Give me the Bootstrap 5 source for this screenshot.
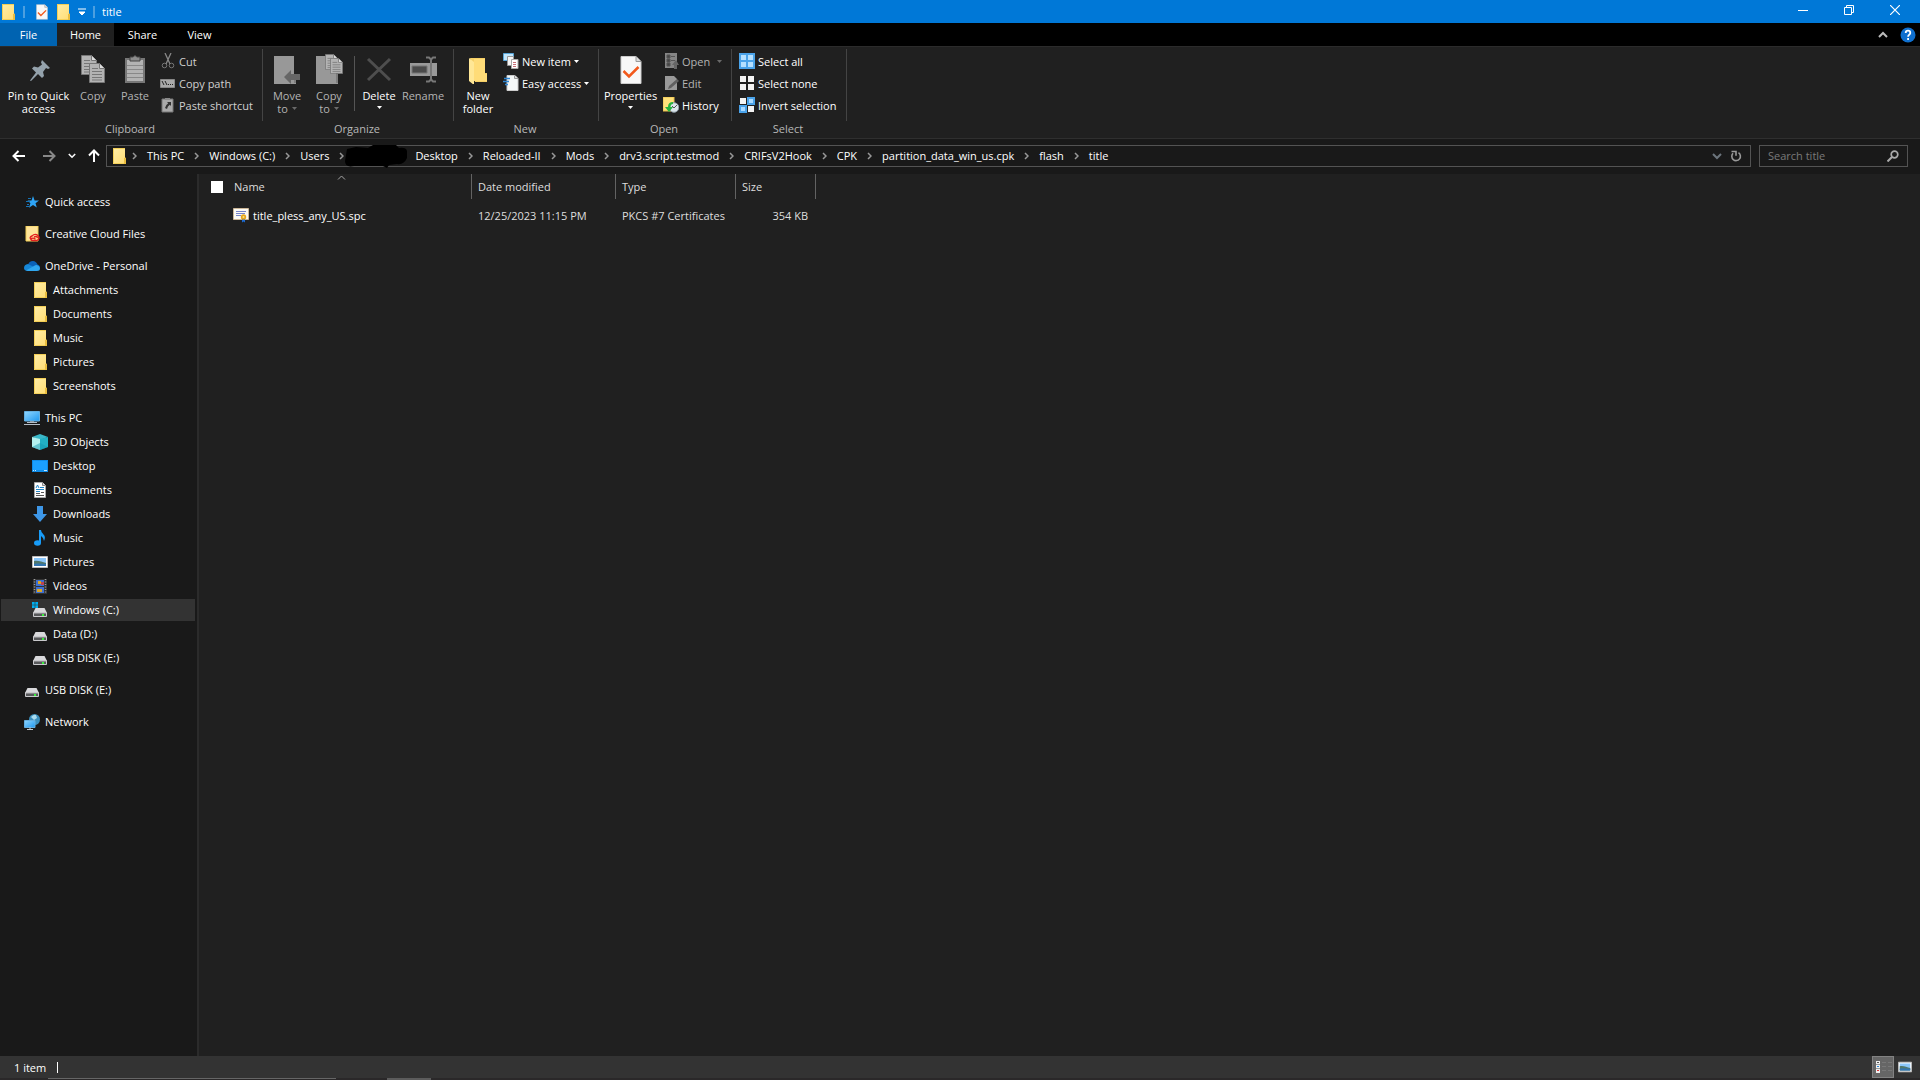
<!DOCTYPE html>
<html lang="en" data-bs-theme="dark">
<head>
<meta charset="utf-8">
<meta name="viewport" content="width=device-width, initial-scale=1">
<title>title</title>
<link href="https://cdn.jsdelivr.net/npm/bootstrap@5.3.0/dist/css/bootstrap.min.css" rel="stylesheet">
<style>
  body { font: 11px/13px "Open Sans", "Noto Sans", sans-serif; background: #202020; color: #fff; }
  button { font: inherit; color: inherit; background: none; border: 0; padding: 0; }
  a { color: inherit; text-decoration: none; }
  svg { display: block; flex: none; }
  .titlebar { height: 23px; background: #0078d7; gap: 7px; }
  .title-sep { width: 2px; height: 12px; background: #4c9fe0; }
  .win-group { padding-right: 2px; }
  .win-btn { width: 46px; height: 23px; padding-bottom: 3px; }
  .tabs { height: 23px; background: #000; }
  .tab-item { width: 57px; text-align: center; line-height: 23px; }
  .tab-file { background: #0063b1; }
  .tab-home { background: #202020; }
  .ribbon { height: 93px; border-top: 1px solid #2b2b2b; border-bottom: 1px solid #2f2f2f; background: #202020; }
  .group-box { padding: 2px 0 0 3px; position: relative; color: #d0d0d0; }
  .group-box::after { content: ""; position: absolute; right: 0; top: 2px; height: 72px; width: 1px; background: #444; }
  .group-body { height: 73px; }
  .group-name { text-align: center; color: #b8b8b8; padding-right: 6px; }
  .g-clip { width: 263px; } .g-org { width: 191px; } .g-new { width: 145px; } .g-open { width: 133px; } .g-sel { width: 115px; }
  .big-btn { width: 42px; height: 72px; padding-top: 5px; display: flex; flex-direction: column; align-items: center; white-space: nowrap; }
  .big-btn svg.big-icon { margin-bottom: 5px; }
  .w-pin { width: 69px; padding-left: 2px; } .w-mid { width: 57px; } .w-ren { width: 46px; }
  .on { color: #fff; }
  .off { color: #b4b4b4; }
  .small-btn { height: 22px; padding-left: 4px; gap: 3px; display: flex; align-items: center; white-space: nowrap; }
  .small-stack { padding-top: 1px; }
  .inner-sep { width: 1px; height: 55px; margin: 7px 3px 0 4px; background: #555; }
  .navrow { height: 35px; background: #191919; padding: 6px 12px 7px 12px; }
  .nav-btn { height: 22px; display: flex; align-items: center; justify-content: center; margin-right: 12px; }
  .nav-back { margin-right: 16px; }
  .nav-up { margin-right: 6px; }
  .address { border: 1px solid #535353; height: 22px; }
  .address-icon { margin-right: 5px; }
  .crumb { margin-right: 10px; padding-bottom: 2px; white-space: nowrap; }
  .crumb-gap { margin-right: 10px; }
  .blot { margin-right: 7px; }
  .search-box { width: 149px; height: 22px; border: 1px solid #535353; padding: 0 8px; }
  .search-box input { background: none; border: 0; outline: 0; padding: 0 0 1px; color: #fff; min-width: 0; width: 100px; }
  .search-box input::placeholder { color: #7a7a7a; opacity: 1; }
  .sidebar { width: 199px; background: #191919; border-right: 2px solid #2b2b2b; padding: 16px 2px 0 1px; }
  .tree-link { display: flex; align-items: center; gap: 5px; height: 22px; margin: 1px 0; padding: 0 0 2px 23px; }
  .tree-link svg { margin-top: 2px; }
  .tree-sub { padding-left: 31px; }
  .tree-gap { margin-top: 9px; }
  .tree-sel { background: #333; }
  .files { table-layout: fixed; width: 617px; border-collapse: collapse; color: #dedede; }
  .files th { font-weight: 400; height: 25px; padding: 0 6px; position: relative; }
  .files th::after { content: ""; position: absolute; right: 0; top: 0; width: 1px; height: 25px; background: #636363; }
  .files td { padding: 4px 8px 0 6px; height: 28px; white-space: nowrap; }
  .files .name-cell { padding-left: 34px; color: #fff; }
  .files .name-head { padding-left: 12px; }
  .c-name { width: 273px; } .c-date { width: 144px; } .c-type { width: 120px; } .c-size { width: 80px; }
  .check-all { appearance: none; width: 12px; height: 12px; background: #fff; margin: 0 11px 0 0; border: 0; }
  .sort-mark { position: absolute; left: 138px; top: 1px; }
  .statusbar { height: 22px; background: #333; padding-left: 14px; }
  .caret-bar { width: 1px; height: 11px; background: #fff; margin-left: 11px; }
  .view-btn { height: 22px; width: 22px; display: flex; align-items: center; justify-content: center; }
  .view-on { background: #666; border: 1px solid #828282; }
  .taskedge { height: 2px; background: #2a2829; }
  .edge-a { width: 288px; height: 1px; background: #666; margin-left: 48px; }
  .edge-b { width: 44px; height: 2px; background: #5c5c5c; margin-left: 51px; }
</style>
</head>
<body class="d-flex flex-column min-vh-100">
<svg width="0" height="0" class="position-absolute" aria-hidden="true">
  <defs>
    <linearGradient id="fold" x1="0" y1="0" x2="1" y2="1"><stop offset="0" stop-color="#ffeea8"/><stop offset="1" stop-color="#ffdc72"/></linearGradient>
    <linearGradient id="scr" x1="0" y1="0" x2="1" y2="1"><stop offset="0" stop-color="#8fd6ff"/><stop offset="1" stop-color="#1f98f0"/></linearGradient>
    <symbol id="folder" viewBox="0 0 16 16"><path d="M2 0h12v10h1v6H2z" fill="url(#fold)"/><path d="M2.500 .5v15h11M2 .5h12" stroke="#f3cf57" fill="none"/><path d="M13 15.500v-5.500l2-.5v6.500h-2z" fill="#e9bd3f"/></symbol>
    <symbol id="check-doc" viewBox="0 0 22 28"><path d="M1 .5h15l5 5v22H1z" fill="#f8f8f8" stroke="#ccc"/><path d="M16 .5v5h5" fill="#ddd" stroke="#999"/><path d="m3.500 15 5.500 5.500L18.500 11" stroke="#f2591c" stroke-width="2.500" fill="none"/></symbol>
    <symbol id="tri" viewBox="0 0 5 3"><path d="M0 0h5L2.500 3z" fill="currentColor"/></symbol>
    <symbol id="chev" viewBox="0 0 5 8"><path d="m1 1 3 3-3 3" fill="none" stroke="#989898" stroke-width="1.500"/></symbol>
    <symbol id="down" viewBox="0 0 10 7"><path d="m1 1 4 4 4-4" fill="none" stroke="currentColor" stroke-width="2"/></symbol>
    <symbol id="drive" viewBox="0 0 16 16"><path d="M3.500 6h9L15 11H1z" fill="#d9d9dc"/><path d="M1.500 10.500h13v4h-13z" fill="#58595b" stroke="#c9c9cc"/><path d="M2 11h12v1H2z" fill="#88888b"/><path d="M10 12h2v2h-2z" fill="#39f03d"/></symbol>
    <symbol id="pc" viewBox="0 0 16 16"><path d="M.5 1.500h15v9.500H.5z" fill="url(#scr)" stroke="#65afe0"/><path d="M6 11h4v2H6z" fill="#8e9aa4"/><path d="M3 12.500h10M0 14.500h16" stroke="#b3bcc6"/></symbol>
    <symbol id="pic" viewBox="0 0 16 16"><path d="M.5 2.500h15v11H.5z" fill="#fff" stroke="#bbb"/><path d="M2 4h12v8H2z" fill="#8cc7fb"/><path d="M2 7c4-1 8 1 12 2v3H2z" fill="#50786d"/><path d="M2 10c5-1 8 0 12 0v2H2z" fill="#3275b1"/></symbol>
    <symbol id="move-base" viewBox="0 0 28 30"><path d="M1 2h20v18h2v10H1z" fill="#989898"/><path d="M21 20h2v9h-2z" fill="#7d7d7d"/></symbol>
    <symbol id="page" viewBox="0 0 16 20"><path d="M.5.500h10l5 5v14H.5z" fill="#b3b3b3" stroke="#777"/><path d="M10.500.500v5h5" fill="#ddd" stroke="#777"/><path d="M3 5.500h6M3 8.500h10M3 11.500h10M3 14.500h10M3 17h10" stroke="#777"/></symbol>
  </defs>
</svg>

<header>
  <div class="titlebar d-flex align-items-center">
    <svg width="16" height="16"><use href="#folder"/></svg>
    <span class="title-sep"></span>
    <button class="ms-1" aria-label="Properties"><svg width="12" height="16"><use href="#check-doc"/></svg></button>
    <button aria-label="New folder"><svg width="16" height="16"><use href="#folder"/></svg></button>
    <button aria-label="Customize toolbar"><svg width="8" height="8" viewBox="0 0 8 8"><path d="M0 1h8M1 4h6L4 7z" fill="#fff" stroke="#fff"/></svg></button>
    <span class="title-sep"></span>
    <span>title</span>
    <div class="win-group d-flex ms-auto">
      <button class="win-btn d-flex align-items-center justify-content-center" aria-label="Minimize"><svg width="10" height="10"><path d="M0 5.500h10" stroke="#fff"/></svg></button>
      <button class="win-btn d-flex align-items-center justify-content-center" aria-label="Restore"><svg width="10" height="10"><path d="M.5 2.500h7v7h-7zM2.500 2.500v-2h7v7h-2" fill="none" stroke="#fff"/></svg></button>
      <button class="win-btn d-flex align-items-center justify-content-center" aria-label="Close"><svg width="10" height="10"><path d="m0 0 10 10M10 0 0 10" stroke="#fff" stroke-width="1.200"/></svg></button>
    </div>
  </div>
  <nav class="tabs d-flex">
    <a class="tab-item tab-file" href="#">File</a>
    <a class="tab-item tab-home" href="#">Home</a>
    <a class="tab-item" href="#">Share</a>
    <a class="tab-item" href="#">View</a>
    <div class="d-flex align-items-center ms-auto gap-2 pe-1">
      <button class="me-1" aria-label="Collapse ribbon"><svg width="10" height="7"><path d="m1 6 4-4 4 4" fill="none" stroke="#bbb" stroke-width="2"/></svg></button>
      <button class="rounded-circle" aria-label="Help"><svg width="16" height="16"><circle cx="8" cy="8" r="7.500" fill="#0f6fce"/><path d="M5.700 6q0-2.300 2.300-2.300T10.300 6c0 1.600-2.200 1.700-2.200 3.700M8.100 11v2" fill="none" stroke="#fff" stroke-width="1.800"/></svg></button>
    </div>
  </nav>

  <div class="ribbon d-flex">
    <section class="group-box g-clip">
      <div class="group-body d-flex">
        <button class="big-btn on w-pin"><svg class="big-icon" width="26" height="30"><path d="m16 6 8 8-2 1-2-1-3 4 1 4-2 2-4-4-7 7-1-.5 6-8-4-4 2-2 4 1 4-3-1-2z" fill="#94a2ac"/></svg>Pin to Quick<br>access</button>
        <button class="big-btn off"><svg class="big-icon" width="26" height="30"><use href="#page" x="1" y="1" width="16" height="20"/><use href="#page" x="9" y="9" width="16" height="20"/></svg>Copy</button>
        <button class="big-btn off"><svg class="big-icon" width="26" height="30"><path d="M3 4h20v25H3z" fill="#777"/><path d="M5 6h16v21H5z" fill="#b3b3b3"/><path d="M5 11.500h16M5 15.500h16M5 19.500h16M5 23.500h16" stroke="#888"/><path d="M8 7V3h3q2-3 4 0h3v4z" fill="#8c8c8c" stroke="#444"/></svg>Paste</button>
        <div class="small-stack">
          <button class="small-btn"><svg width="16" height="16"><path d="m5 0 5 11M11 0 6 11" stroke="#888" stroke-width="1.300"/><circle cx="4.500" cy="12.500" r="2.300" fill="none" stroke="#777"/><circle cx="11.500" cy="12.500" r="2.300" fill="none" stroke="#777"/></svg>Cut</button>
          <button class="small-btn"><svg width="16" height="16"><path d="M.5 4.500h14v8H.5z" fill="#aaa" stroke="#888"/><path d="m2 6 2 4M5 6l2 4M8 9.500h1M10 9.500h1M12 9.500h1" stroke="#222"/></svg>Copy path</button>
          <button class="small-btn"><svg width="16" height="16"><path d="M2 2h11v13H2z" fill="#aaa" stroke="#777"/><path d="M5 1h5v2H5z" fill="#888"/><path d="M7 5h4v4L9.800 7.800Q7.500 9 7 12L5 11q.5-3 3.200-4.800z" fill="#333"/></svg>Paste shortcut</button>
        </div>
      </div>
      <div class="group-name">Clipboard</div>
    </section>

    <section class="group-box g-org">
      <div class="group-body d-flex">
        <button class="big-btn off"><svg class="big-icon" width="28" height="30"><use href="#move-base" width="28" height="30"/><path d="m11 23 7-7v4h9v6h-9v4z" fill="#666"/></svg>Move<span class="d-flex align-items-center gap-1">to <svg width="5" height="3" class="opacity-50"><use href="#tri"/></svg></span></button>
        <button class="big-btn off"><svg class="big-icon" width="28" height="30"><use href="#move-base" width="28" height="30"/><use href="#page" x="10" y="0" width="13" height="16"/><use href="#page" x="15" y="4" width="13" height="16"/></svg>Copy<span class="d-flex align-items-center gap-1">to <svg width="5" height="3" class="opacity-50"><use href="#tri"/></svg></span></button>
        <span class="inner-sep"></span>
        <button class="big-btn on"><svg class="big-icon" width="26" height="30"><path d="m2 5 22 21M24 5 2 26" stroke="#4e4e4e" stroke-width="3"/></svg>Delete<svg width="5" height="3" class="mt-1"><use href="#tri"/></svg></button>
        <button class="big-btn off w-ren"><svg class="big-icon" width="30" height="30"><path d="M2 9h27v13H2z" fill="#999"/><path d="M4 12h15v7H4z" fill="#4a4a4a" stroke="#777"/><path d="M18 3.500h3l2 2 2-2h3M18 27.500h3l2-2 2 2h3M23 5v20" fill="none" stroke="#777" stroke-width="2"/></svg>Rename</button>
      </div>
      <div class="group-name">Organize</div>
    </section>

    <section class="group-box g-new">
      <div class="group-body d-flex">
        <button class="big-btn on"><svg class="big-icon" width="22" height="30"><path d="M3 4h15v15h2v9H8z" fill="#f5cf66"/><path d="m2 4 5 4v23l-5-4z" fill="#ffe796"/><path d="M7 5h11v15h2v7H7z" fill="#ffdc78"/></svg>New<br>folder</button>
        <div class="small-stack on">
          <button class="small-btn"><svg width="16" height="16"><path d="M.5.500h10v7H.5z" fill="#c3e6fb" stroke="#58a5d8"/><path d="M4.500 3.500h6v9h-6z" fill="#f6f6f6" stroke="#999"/><path d="M8.500 6.500h6.500v9H8.500z" fill="#fff" stroke="#aaa"/><path d="M10 9.500h3M10 11.500h3M10 13.500h3" stroke="#c76f78"/></svg>New item <svg width="5" height="3"><use href="#tri"/></svg></button>
          <button class="small-btn"><svg width="16" height="16"><path d="M4 .5h8l3 3v12H4z" fill="#f5f8f8" stroke="#ccc"/><path d="M11.500.500v3H15" fill="#ddd" stroke="#999"/><path d="M1 3.500h6M0 6.500h6M2 9.500h3" stroke="#2d86d4" stroke-width="1.500"/></svg>Easy access <svg width="5" height="3"><use href="#tri"/></svg></button>
        </div>
      </div>
      <div class="group-name">New</div>
    </section>

    <section class="group-box g-open">
      <div class="group-body d-flex">
        <button class="big-btn on w-mid"><svg class="big-icon" width="22" height="30"><use href="#check-doc" y="2" width="22" height="28"/></svg>Properties<svg width="5" height="3" class="mt-1"><use href="#tri"/></svg></button>
        <div class="small-stack">
          <button class="small-btn off"><svg width="16" height="16"><path d="M2 0h12v15H2z" fill="#858585"/><path d="M4 2h3v3H4zM4 6h3v3H4zM4 10h3v3H4zM8 3.500h4M8 7.500h4" fill="#444" stroke="#555"/><path d="M11 16v-4H9l4-5 3 5h-2v4z" fill="#666"/></svg>Open <svg width="5" height="3" class="ms-1 opacity-50"><use href="#tri"/></svg></button>
          <button class="small-btn off"><svg width="16" height="16"><path d="M2 1h9l3 3v11H2z" fill="#999"/><path d="m5 14 1-3 8-7 2 2-8 7z" fill="#606060"/></svg>Edit</button>
          <button class="small-btn on"><svg width="16" height="16"><path d="M0 0h11v14H0z" fill="#ffe17b" stroke="#e9bf4a"/><circle cx="11" cy="10.500" r="4.800" fill="#dce5ea" stroke="#8998a2"/><path d="m11 11 3-3M11 11l-2-2" stroke="#555"/><path d="M10 5Q5 5 5 10H2l4 5 4-5H7.500q0-3 2.500-3z" fill="#27b23e"/></svg>History</button>
        </div>
      </div>
      <div class="group-name">Open</div>
    </section>

    <section class="group-box g-sel">
      <div class="group-body small-stack on">
        <button class="small-btn"><svg width="16" height="16"><path d="M0 0h16v16H0z" fill="#4aa3ea"/><path d="M2 2h5v5H2zM9 2h5v5H9zM2 9h5v5H2zM9 9h5v5H9z" fill="#b5e0ff"/></svg>Select all</button>
        <button class="small-btn"><svg width="16" height="16"><path d="M1 1h6v6H1zM9 1h6v6H9zM1 9h6v6H1zM9 9h6v6H9z" fill="#f3f3f3"/></svg>Select none</button>
        <button class="small-btn"><svg width="16" height="16"><path d="M1 1h6v6H1zM9 9h6v6H9z" fill="#f3f3f3"/><path d="M9 1h6v6H9zM1 9h6v6H1z" fill="#a9d9ff" stroke="#4aa3ea" stroke-width="2"/></svg>Invert selection</button>
      </div>
      <div class="group-name">Select</div>
    </section>
  </div>

  <div class="navrow d-flex align-items-center">
    <button class="nav-btn nav-back" aria-label="Back"><svg width="14" height="12"><path d="M13 6H2M6.500 1l-5 5 5 5" fill="none" stroke="#fff" stroke-width="2"/></svg></button>
    <button class="nav-btn" aria-label="Forward"><svg width="14" height="12"><path d="M1 6h11M7.500 1l5 5-5 5" fill="none" stroke="#888" stroke-width="2"/></svg></button>
    <button class="nav-btn text-light" aria-label="Recent locations"><svg width="8" height="6"><use href="#down"/></svg></button>
    <button class="nav-btn nav-up" aria-label="Up"><svg width="12" height="14"><path d="M6 13V2M1 6.500l5-5 5 5" fill="none" stroke="#fff" stroke-width="2"/></svg></button>
    <nav class="address d-flex align-items-center flex-grow-1 ps-1" aria-label="Address">
      <svg width="16" height="16" class="address-icon"><use href="#folder"/></svg>
      <svg width="5" height="8" class="crumb-gap"><use href="#chev"/></svg>
      <a class="crumb" href="#">This PC</a><svg width="5" height="8" class="crumb-gap"><use href="#chev"/></svg>
      <a class="crumb" href="#">Windows (C:)</a><svg width="5" height="8" class="crumb-gap"><use href="#chev"/></svg>
      <a class="crumb" href="#">Users</a><svg width="5" height="8"><use href="#chev"/></svg>
      <svg width="64" height="24" class="blot"><path d="M3 5 12 3l12 1 5-3h23l3 3q7-1 8 3v7q-3 7-10 6l-8 1-2 3-4-2H10q-9 2-9-5z" fill="#000"/></svg>
      <a class="crumb" href="#">Desktop</a><svg width="5" height="8" class="crumb-gap"><use href="#chev"/></svg>
      <a class="crumb" href="#">Reloaded-II</a><svg width="5" height="8" class="crumb-gap"><use href="#chev"/></svg>
      <a class="crumb" href="#">Mods</a><svg width="5" height="8" class="crumb-gap"><use href="#chev"/></svg>
      <a class="crumb" href="#">drv3.script.testmod</a><svg width="5" height="8" class="crumb-gap"><use href="#chev"/></svg>
      <a class="crumb" href="#">CRIFsV2Hook</a><svg width="5" height="8" class="crumb-gap"><use href="#chev"/></svg>
      <a class="crumb" href="#">CPK</a><svg width="5" height="8" class="crumb-gap"><use href="#chev"/></svg>
      <a class="crumb" href="#">partition_data_win_us.cpk</a><svg width="5" height="8" class="crumb-gap"><use href="#chev"/></svg>
      <a class="crumb" href="#">flash</a><svg width="5" height="8" class="crumb-gap"><use href="#chev"/></svg>
      <a class="crumb" href="#">title</a>
      <button class="ms-auto text-secondary" aria-label="Previous locations"><svg width="10" height="7"><use href="#down"/></svg></button>
      <button class="mx-1 px-1" aria-label="Refresh"><svg width="12" height="12"><path d="M8.500 2.700A4.300 4.300 0 1 1 3 3.300M1.500 1.500H6v4.300" fill="none" stroke="#999" stroke-width="1.600"/></svg></button>
    </nav>
    <div class="search-box d-flex align-items-center justify-content-between ms-2">
      <input type="search" placeholder="Search title" aria-label="Search title">
      <svg width="12" height="12"><circle cx="7.500" cy="4.500" r="3.300" fill="none" stroke="#aaa" stroke-width="1.700"/><path d="m5 7-4.500 4.500" stroke="#aaa" stroke-width="2"/></svg>
    </div>
  </div>
</header>

<div class="d-flex flex-grow-1">
  <nav class="sidebar d-flex flex-column flex-shrink-0" aria-label="Folders">
    <a class="tree-link" href="#"><svg width="16" height="16"><path d="m9 2 1.600 4.500H15l-3.500 2.800 1.300 4.200L9 11l-4 2.800 1.400-4.500L3.500 6.500h4z" fill="#2ea4f5"/><path d="M4 4.500h3M2 7.500h4M3 10.500h2M2 12.500h3" stroke="#1673b7"/></svg>Quick access</a>
    <a class="tree-link tree-gap" href="#"><svg width="16" height="16"><path d="M2 0h12v15H2z" fill="#ffe59a" stroke="#f3cf57"/><path d="M7 13.500q-2-2.500 1-3.500 3-3 6-.5 2.500 3-1 5H9q-3 0-1.500-2 2-1 4 .7M10 11q3-1.500 3.500 1" fill="none" stroke="#e32020" stroke-width="1.400"/></svg>Creative Cloud Files</a>
    <a class="tree-link tree-gap" href="#"><svg width="16" height="16"><path d="M4 7q1-4 5-4 3 0 4.500 3.500Q16 7 16 10H4z" fill="#0b62b8"/><path d="M0 10q0-3.500 4-4l8 4-8 3Q0 13 0 10z" fill="#1687d8"/><path d="M2 12.500 10 8q2-1.500 4-.5 2 .8 2 3 0 2.500-3 2.500H4z" fill="#30a7ef"/></svg>OneDrive - Personal</a>
    <a class="tree-link tree-sub" href="#"><svg width="16" height="16"><use href="#folder"/></svg>Attachments</a>
    <a class="tree-link tree-sub" href="#"><svg width="16" height="16"><use href="#folder"/></svg>Documents</a>
    <a class="tree-link tree-sub" href="#"><svg width="16" height="16"><use href="#folder"/></svg>Music</a>
    <a class="tree-link tree-sub" href="#"><svg width="16" height="16"><use href="#folder"/></svg>Pictures</a>
    <a class="tree-link tree-sub" href="#"><svg width="16" height="16"><use href="#folder"/></svg>Screenshots</a>
    <a class="tree-link tree-gap" href="#"><svg width="16" height="16"><use href="#pc"/></svg>This PC</a>
    <a class="tree-link tree-sub" href="#"><svg width="16" height="16"><path d="m0 3 8-3 8 3-8 3z" fill="#3ab8c9"/><path d="m0 3 8 2v11l-8-3z" fill="#b4f0ee"/><path d="m16 3-8 2v11l8-3z" fill="#22b0c4"/><path d="m0 13 8-4 8 4-8 3z" fill="#1397b0" opacity=".5"/></svg>3D Objects</a>
    <a class="tree-link tree-sub" href="#"><svg width="16" height="16"><path d="M0 2h16v12H0z" fill="#0f8ce8"/><path d="M1 3h14v9H1z" fill="#1ba0ff"/><path d="M1 12.500h1M3 12.500h1M12 12.500h3" stroke="#c5e6ff"/></svg>Desktop</a>
    <a class="tree-link tree-sub" href="#"><svg width="16" height="16"><path d="M2.500.500h8l3 3v12h-11z" fill="#fff" stroke="#aaa"/><path d="M10.500.500v3h3" fill="#ddd" stroke="#888"/><path d="m4 6 1.500-3L7 6M8 5.500h4M4 7.500h8M4 9.500h4" stroke="#2286c8" fill="none"/><path d="M4 11.500h4M9 10.500h3M4 13.500h8" stroke="#555"/></svg>Documents</a>
    <a class="tree-link tree-sub" href="#"><svg width="16" height="16"><path d="M5 0h6v8h4l-7 8-7-8h4z" fill="#3e97e8"/></svg>Downloads</a>
    <a class="tree-link tree-sub" href="#"><svg width="16" height="16"><ellipse cx="5.500" cy="13" rx="3.500" ry="2.700" fill="#189cf8"/><path d="M7 0h2q0 2.500 2.500 4.500T12 11q0-3-3-5v7H7z" fill="#189cf8"/></svg>Music</a>
    <a class="tree-link tree-sub" href="#"><svg width="16" height="16"><use href="#pic"/></svg>Pictures</a>
    <a class="tree-link tree-sub" href="#"><svg width="16" height="16"><path d="M1 1h14v15H1z" fill="#333"/><path d="M2.500 1v15M13.500 1v15" stroke="#999" stroke-dasharray="1 1.500" stroke-width="1.500"/><path d="M4 2h8v6H4zM4 9h8v6H4z" fill="#3d6fd2"/><path d="M6 3h3v3H6zM5 11h5v3H5z" fill="#d9a526"/><path d="M9 4h3v3H9z" fill="#bd4352"/></svg>Videos</a>
    <a class="tree-link tree-sub tree-sel" href="#"><svg width="16" height="16"><use href="#drive"/><path d="M0 0h2.700v2.700H0zM3.300 0H6v2.700H3.300zM0 3.300h2.700V6H0zM3.300 3.300H6V6H3.300z" fill="#00aef0"/></svg>Windows (C:)</a>
    <a class="tree-link tree-sub" href="#"><svg width="16" height="16"><use href="#drive"/></svg>Data (D:)</a>
    <a class="tree-link tree-sub" href="#"><svg width="16" height="16"><use href="#drive"/></svg>USB DISK (E:)</a>
    <a class="tree-link tree-gap" href="#"><svg width="16" height="16"><use href="#drive"/></svg>USB DISK (E:)</a>
    <a class="tree-link tree-gap" href="#"><svg width="16" height="16"><circle cx="10.500" cy="5.500" r="5.500" fill="#3b8fbd"/><path d="M7 3q3-3 5-2l1 3-3 2z" fill="#a9dcef"/><path d="M.5 6.500h10.500v7H.5z" fill="url(#scr)" stroke="#65afe0"/><path d="M3 15.500h6M6 13.500v2" stroke="#c3ccd3"/></svg>Network</a>
  </nav>
  <main class="flex-grow-1">
    <table class="files">
      <colgroup><col class="c-name"><col class="c-date"><col class="c-type"><col class="c-size"></colgroup>
      <thead>
        <tr>
          <th class="name-head"><span class="d-flex align-items-center"><input class="check-all" type="checkbox" aria-label="Select all items">Name</span><svg class="sort-mark" width="9" height="5"><path d="m1 4.500 3.500-3.500L8 4.500" fill="none" stroke="#a5a5a5"/></svg></th>
          <th>Date modified</th><th>Type</th><th>Size</th>
        </tr>
      </thead>
      <tbody>
        <tr>
          <td class="name-cell"><span class="d-flex align-items-center gap-1"><svg width="16" height="16"><path d="M.5 1.500h15v11H.5z" fill="#fbfaf4" stroke="#cbb697"/><path d="M3 4.500h10M3 6.500h9M3 8.500h5" stroke="#7784c8"/><path d="M9 11v4.500l1.500-1 1.500 1V11z" fill="#1c69cf"/><circle cx="10.500" cy="10" r="2.700" fill="#e5a51c"/><circle cx="10.500" cy="10" r="1" fill="#fae287"/></svg>title_pless_any_US.spc</span></td>
          <td>12/25/2023 11:15 PM</td><td>PKCS #7 Certificates</td><td class="text-end">354 KB</td>
        </tr>
      </tbody>
    </table>
  </main>
</div>

<footer>
  <div class="statusbar d-flex align-items-center">
    <span>1 item</span><span class="caret-bar"></span>
    <button class="view-btn view-on ms-auto" aria-label="Details view"><svg width="18" height="14"><path d="M2 1h4v12H2z" fill="#eee"/><path d="M3 2.500h2" stroke="#555"/><path d="M3 6.500h2" stroke="#2786d8"/><path d="M3 10.500h2" stroke="#d33"/><path d="M2 4.500h4M2 8.500h4" stroke="#999"/><path d="M8 2.500h4M14 2.500h4M8 6.500h4M14 6.500h4M8 10.500h4M14 10.500h4" stroke="#787878"/></svg></button>
    <button class="view-btn me-1" aria-label="Large icons view"><svg width="14" height="14"><use href="#pic"/></svg></button>
  </div>
  <div class="taskedge d-flex"><span class="edge-a"></span><span class="edge-b"></span></div>
</footer>
<script src="https://cdn.jsdelivr.net/npm/bootstrap@5.3.0/dist/js/bootstrap.bundle.min.js"></script>
</body>
</html>
